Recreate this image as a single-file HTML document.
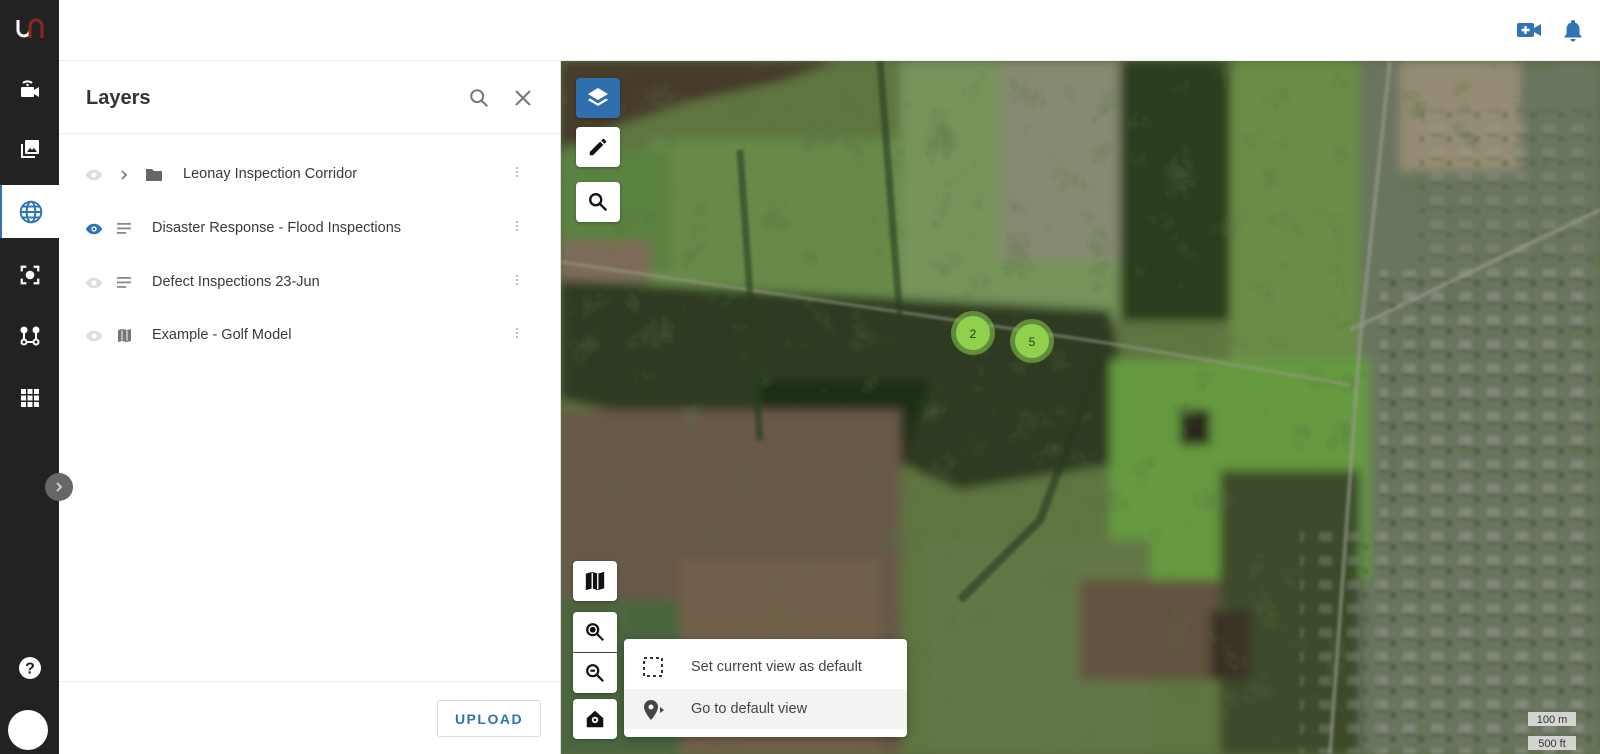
<!DOCTYPE html>
<html><head><meta charset="utf-8"><style>
*{margin:0;padding:0;box-sizing:border-box}
body{width:1600px;height:754px;overflow:hidden;background:#fff;font-family:"Liberation Sans",sans-serif;position:relative}
.abs{position:absolute}
#side{left:0;top:0;width:59px;height:754px;background:#222}
.si{position:absolute;left:0;width:59px;display:flex;align-items:center;justify-content:center}
#top{left:59px;top:0;width:1541px;height:61px;background:#fff;border-bottom:1px solid #eee}
#panel{left:59px;top:61px;width:502px;height:693px;background:#fff;border-right:1px solid #ddd}
.row{position:absolute;left:0;width:502px;height:30px;font-size:14.5px;color:#3a3a3a}
.row span{position:absolute;top:6px}
.dots{position:absolute;left:457px;top:7px;width:3px}
.dots i{display:block;width:2px;height:2px;background:#bbb;margin-bottom:2px}
.mb{position:absolute;width:44px;height:40px;background:#fff;border-radius:4px;display:flex;align-items:center;justify-content:center;box-shadow:0 1px 3px rgba(0,0,0,.3)}
</style></head><body>
<div id="side" class="abs">
 <div class="si" style="top:14px;height:30px"><svg width="30" height="26" viewBox="0 0 30 26"><path d="M3 4v10a6 6 0 0 0 12 0" stroke="#fff" stroke-width="3" fill="none"/><path d="M15 22V10a6 6 0 0 1 12 0v12" stroke="#8a2a1e" stroke-width="3" fill="none"/></svg></div>
 <div class="si" style="top:74px;height:28px"><svg width="24" height="24" viewBox="0 0 24 24" fill="#fff"><rect x="3" y="11" width="13" height="10" rx="1"/><path d="M16 14l5-3v10l-5-3z"/><path d="M5 7a7 7 0 0 1 9 0" stroke="#fff" stroke-width="2" fill="none"/><circle cx="9.5" cy="9" r="1.2"/></svg></div>
 <div class="si" style="top:135px;height:28px"><svg width="24" height="24" viewBox="0 0 24 24" fill="#fff"><rect x="7" y="3" width="14" height="14" rx="1"/><path d="M3 7v14h14v-2H5V7z"/><path d="M9 15l3-4 2 2 2-2 3 4z" fill="#222"/></svg></div>
 <div class="abs" style="left:0;top:185px;width:59px;height:53px;background:#fff;display:flex;align-items:center;justify-content:center;border-left:2px solid #2f73b5"><svg width="26" height="26" viewBox="0 0 24 24" fill="none" stroke="#2f73b5" stroke-width="1.8"><circle cx="12" cy="12" r="9.5"/><ellipse cx="12" cy="12" rx="4" ry="9.5"/><path d="M2.5 12h19M4 7h16M4 17h16"/></svg></div>
 <div class="si" style="top:262px;height:26px"><svg width="22" height="22" viewBox="0 0 24 24" fill="none" stroke="#fff" stroke-width="2.4"><path d="M3 8V3h5M16 3h5v5M21 16v5h-5M8 21H3v-5"/><circle cx="12" cy="12" r="3.5" fill="#fff"/></svg></div>
 <div class="si" style="top:323px;height:26px"><svg width="24" height="24" viewBox="0 0 24 24" fill="#fff"><circle cx="6" cy="6" r="3.5"/><circle cx="18" cy="6" r="3.5"/><path d="M6 9v6M18 9v6" stroke="#fff" stroke-width="2"/><circle cx="6" cy="18" r="2.5" fill="none" stroke="#fff" stroke-width="2"/><circle cx="18" cy="18" r="2.5" fill="none" stroke="#fff" stroke-width="2"/><path d="M8.5 18h7" stroke="#fff" stroke-width="2"/></svg></div>
 <div class="si" style="top:385px;height:26px"><svg width="20" height="20" viewBox="0 0 20 20" fill="#fff"><rect x="1" y="1" width="5" height="5"/><rect x="7.5" y="1" width="5" height="5"/><rect x="14" y="1" width="5" height="5"/><rect x="1" y="7.5" width="5" height="5"/><rect x="7.5" y="7.5" width="5" height="5"/><rect x="14" y="7.5" width="5" height="5"/><rect x="1" y="14" width="5" height="5"/><rect x="7.5" y="14" width="5" height="5"/><rect x="14" y="14" width="5" height="5"/></svg></div>
 <div class="si" style="top:655px;height:26px"><svg width="24" height="24" viewBox="0 0 24 24"><circle cx="12" cy="12" r="11" fill="#fff"/><text x="12" y="17.5" text-anchor="middle" font-size="16" font-weight="bold" fill="#222" font-family="Liberation Sans">?</text></svg></div>
 <div class="abs" style="left:8px;top:710px;width:40px;height:40px;border-radius:50%;background:#fff"></div>
</div>
<div class="abs" style="left:45px;top:473px;width:28px;height:28px;border-radius:50%;background:#666;z-index:5;display:flex;align-items:center;justify-content:center"><svg width="12" height="12" viewBox="0 0 12 12"><path d="M4 2l4 4-4 4" stroke="#ccc" stroke-width="2" fill="none"/></svg></div>
<div id="top" class="abs">
 <svg class="abs" style="left:1457px;top:20px" width="26" height="20" viewBox="0 0 26 20"><rect x="1" y="3" width="17" height="14" rx="2" fill="#2f73b5"/><path d="M18 8l7-4v12l-7-4z" fill="#2f73b5"/><path d="M9.5 6v8M5.5 10h8" stroke="#fff" stroke-width="2.4"/></svg>
 <svg class="abs" style="left:1502px;top:18px" width="24" height="24" viewBox="0 0 24 24" fill="#2f73b5"><path d="M12 2a2 2 0 0 1 2 2v.5a6.5 6.5 0 0 1 4.5 6.2V16l2 2.5v1H3.5v-1l2-2.5v-5.3A6.5 6.5 0 0 1 10 4.5V4a2 2 0 0 1 2-2z"/><path d="M9.5 21h5a2.5 2.5 0 0 1-5 0z"/></svg>
</div>
<div id="panel" class="abs">
 <div class="abs" style="left:27px;top:26px;font-size:20px;font-weight:bold;color:#333">Layers</div>
 <svg class="abs" style="left:409px;top:26px" width="22" height="22" viewBox="0 0 24 24" fill="none" stroke="#777" stroke-width="2.2"><circle cx="10" cy="10" r="6.5"/><path d="M15 15l6 6"/></svg>
 <svg class="abs" style="left:455px;top:28px" width="18" height="18" viewBox="0 0 18 18" stroke="#777" stroke-width="2"><path d="M2 2l14 14M16 2L2 16"/></svg>
 <div class="abs" style="left:0;top:72px;width:502px;height:1px;background:#eee"></div>
 <div class="row" style="top:99px">
  <svg class="abs" style="left:26px;top:8px" width="18" height="14" viewBox="0 0 24 16"><path d="M1 8C4 3 8 1 12 1s8 2 11 7c-3 5-7 7-11 7S4 13 1 8z" fill="#ddd"/><circle cx="12" cy="8" r="3.5" fill="#fff"/></svg>
  <svg class="abs" style="left:61px;top:9px" width="8" height="12" viewBox="0 0 8 12"><path d="M2 2l4 4-4 4" stroke="#777" stroke-width="1.6" fill="none"/></svg>
  <svg class="abs" style="left:87px;top:8px" width="16" height="13" viewBox="0 0 16 13"><path d="M0 1h6l2 2h8v10H0z" fill="#666"/></svg>
  <span style="left:124px">Leonay Inspection Corridor</span>
  <div class="dots"><i></i><i></i><i></i></div>
 </div>
 <div class="row" style="top:153px">
  <svg class="abs" style="left:26px;top:8px" width="18" height="14" viewBox="0 0 24 16"><path d="M1 8C4 3 8 1 12 1s8 2 11 7c-3 5-7 7-11 7S4 13 1 8z" fill="#2f73b5"/><circle cx="12" cy="8" r="3.5" fill="#fff"/><circle cx="12" cy="8" r="1.8" fill="#2f73b5"/></svg>
  <svg class="abs" style="left:58px;top:9px" width="14" height="11" viewBox="0 0 14 11" fill="#888"><rect y="0" width="14" height="1.8"/><rect y="4.5" width="14" height="1.8"/><rect y="9" width="9" height="1.8"/></svg>
  <span style="left:93px">Disaster Response - Flood Inspections</span>
  <div class="dots"><i></i><i></i><i></i></div>
 </div>
 <div class="row" style="top:207px">
  <svg class="abs" style="left:26px;top:8px" width="18" height="14" viewBox="0 0 24 16"><path d="M1 8C4 3 8 1 12 1s8 2 11 7c-3 5-7 7-11 7S4 13 1 8z" fill="#ddd"/><circle cx="12" cy="8" r="3.5" fill="#fff"/></svg>
  <svg class="abs" style="left:58px;top:9px" width="14" height="11" viewBox="0 0 14 11" fill="#888"><rect y="0" width="14" height="1.8"/><rect y="4.5" width="14" height="1.8"/><rect y="9" width="9" height="1.8"/></svg>
  <span style="left:93px">Defect Inspections 23-Jun</span>
  <div class="dots"><i></i><i></i><i></i></div>
 </div>
 <div class="row" style="top:260px">
  <svg class="abs" style="left:26px;top:8px" width="18" height="14" viewBox="0 0 24 16"><path d="M1 8C4 3 8 1 12 1s8 2 11 7c-3 5-7 7-11 7S4 13 1 8z" fill="#ddd"/><circle cx="12" cy="8" r="3.5" fill="#fff"/></svg>
  <svg class="abs" style="left:59px;top:8px" width="13" height="13" viewBox="0 0 13 13"><path d="M0 1l4 -1 5 1 4-1v12l-4 1-5-1-4 1z" fill="#777"/><path d="M4 1.5v10M9 1.5v10" stroke="#fff" stroke-width="1"/></svg>
  <span style="left:93px">Example - Golf Model</span>
  <div class="dots"><i></i><i></i><i></i></div>
 </div>
 <div class="abs" style="left:0;top:620px;width:502px;height:1px;background:#eee"></div>
 <div class="abs" style="left:378px;top:639px;width:104px;height:37px;border:1px solid #ddd;border-radius:3px;color:#2f73b5;font-weight:bold;font-size:14px;letter-spacing:1.5px;display:flex;align-items:center;justify-content:center">UPLOAD</div>
</div>
<svg class="abs" style="left:561px;top:61px" width="1039" height="693" viewBox="561 61 1039 693">
 <defs>
  <filter id="b"><feGaussianBlur stdDeviation="5"/></filter>
  <filter id="b2"><feGaussianBlur stdDeviation="1.2"/></filter>
  <filter id="b3"><feGaussianBlur stdDeviation="1.5"/></filter>
  <filter id="n" x="0" y="0" width="100%" height="100%"><feTurbulence baseFrequency="0.025" numOctaves="4" seed="7"/><feColorMatrix type="matrix" values="0 0 0 0 0.1  0 0 0 0 0.16  0 0 0 0 0.06  1.6 0 0 0 -0.7"/></filter>
  <pattern id="h" width="28" height="24" patternUnits="userSpaceOnUse"><rect x="3" y="4" width="13" height="9" fill="#9c9e96"/><rect x="3" y="13" width="13" height="3" fill="#3d4530"/><rect x="18" y="16" width="6" height="6" fill="#34442a"/></pattern>
 </defs>
 <rect x="561" y="61" width="1039" height="693" fill="#5a6a40"/>
 <g filter="url(#b)">
  <rect x="561" y="61" width="1039" height="693" fill="#5e7440"/>
  <rect x="650" y="140" width="300" height="170" fill="#678a48"/>
  <rect x="900" y="61" width="240" height="260" fill="#76935a"/>
  <rect x="1000" y="61" width="130" height="200" fill="#858a70"/>
  <rect x="1120" y="61" width="120" height="260" fill="#2a3d1f"/>
  <rect x="1230" y="61" width="150" height="300" fill="#6a8c46"/>
  <rect x="1360" y="61" width="240" height="693" fill="#6a7560"/>
  <rect x="1400" y="61" width="120" height="110" fill="#948c72"/>
  <rect x="561" y="150" width="110" height="120" fill="#5a8240"/>
  <rect x="561" y="240" width="90" height="40" fill="#7e6c58"/>
  <polygon points="561,280 1110,310 1140,460 960,490 870,450 760,440 561,400" fill="#2e3a22"/>
  <polygon points="760,380 930,380 900,470 760,460" fill="#1c2f16"/>
  <rect x="561" y="410" width="340" height="344" fill="#675847"/>
  <rect x="561" y="600" width="160" height="154" fill="#4a653c"/>
  <rect x="680" y="560" width="200" height="194" fill="#725f4a"/>
  <rect x="1110" y="360" width="260" height="220" fill="#659a40"/>
  <rect x="930" y="540" width="220" height="214" fill="#647646"/>
  <rect x="1080" y="580" width="150" height="100" fill="#625340"/>
  <rect x="1220" y="470" width="140" height="284" fill="#3e4c2b"/>
  <rect x="1210" y="610" width="40" height="70" fill="#3a3126"/>
  <rect x="1180" y="410" width="30" height="35" fill="#2a281c"/>
  <polygon points="561,61 840,61 780,82 690,102 620,125 561,150" fill="#463a2c"/>
 </g>
 <rect x="561" y="61" width="1039" height="693" filter="url(#n)" opacity=".6"/>
 <g opacity=".45" filter="url(#b3)">
  <rect x="1380" y="270" width="220" height="484" fill="url(#h)"/>
  <rect x="1420" y="110" width="180" height="160" fill="url(#h)" opacity=".6"/>
  <rect x="1300" y="530" width="90" height="224" fill="url(#h)" opacity=".7"/>
 </g>
 <g filter="url(#b2)" stroke-opacity=".6">
  <path d="M561 262L900 312 1120 345 1350 385" stroke="#9a9a88" stroke-width="3" fill="none"/>
  <path d="M1390 61L1360 340 1330 754" stroke="#9d9d90" stroke-width="4" fill="none"/>
  <path d="M1350 330L1600 210" stroke="#9d9d90" stroke-width="4" fill="none"/>
  <path d="M1100 360L1040 520 960 600" stroke="#2a3820" stroke-width="8" fill="none"/>
  <path d="M740 150L760 440" stroke="#2a3a20" stroke-width="7" fill="none"/>
  <path d="M880 61L900 320" stroke="#2a3a20" stroke-width="7" fill="none"/>
 </g>
 <circle cx="973" cy="333" r="22" fill="#8ccc4e" opacity=".55"/><circle cx="973" cy="333" r="17" fill="#8fd04c"/>
 <text x="973" y="338" text-anchor="middle" font-size="12" fill="#2b3b1a" font-family="Liberation Sans">2</text>
 <circle cx="1032" cy="341" r="22" fill="#8ccc4e" opacity=".55"/><circle cx="1032" cy="341" r="17" fill="#8fd04c"/>
 <text x="1032" y="346" text-anchor="middle" font-size="12" fill="#2b3b1a" font-family="Liberation Sans">5</text>
 <rect x="1528" y="712" width="48" height="14" fill="#eee" opacity=".8"/><text x="1552" y="723" text-anchor="middle" font-size="11" fill="#333" font-family="Liberation Sans">100 m</text>
 <rect x="1528" y="736" width="48" height="14" fill="#eee" opacity=".8"/><text x="1552" y="747" text-anchor="middle" font-size="11" fill="#333" font-family="Liberation Sans">500 ft</text>
</svg>
<div class="mb" style="left:576px;top:78px;background:#2f6fb0"><svg width="24" height="24" viewBox="0 0 24 24" fill="#fff"><path d="M12 2l10 6-10 6L2 8z"/><path d="M4 12.5l8 5 8-5 2 1.5-10 6-10-6z"/></svg></div>
<div class="mb" style="left:576px;top:127px"><svg width="22" height="22" viewBox="0 0 24 24" fill="#111"><path d="M3 17.5V21h3.5L17.8 9.7l-3.5-3.5zM20.7 6.8a1 1 0 0 0 0-1.4l-2.1-2.1a1 1 0 0 0-1.4 0l-1.7 1.7 3.5 3.5z"/></svg></div>
<div class="mb" style="left:576px;top:182px"><svg width="22" height="22" viewBox="0 0 24 24" fill="none" stroke="#111" stroke-width="2.6"><circle cx="9.5" cy="9.5" r="6"/><path d="M14 14l7 7"/></svg></div>
<div class="mb" style="left:573px;top:561px"><svg width="22" height="22" viewBox="0 0 24 24" fill="#111"><path d="M2 4l7-2 6 2 7-2v18l-7 2-6-2-7 2z"/><path d="M9 3v17M15 4v17" stroke="#fff" stroke-width="1.5"/></svg></div>
<div class="mb" style="left:573px;top:612px;border-radius:4px 4px 0 0"><svg width="22" height="22" viewBox="0 0 24 24" fill="none" stroke="#111" stroke-width="2.4"><circle cx="9.5" cy="9.5" r="6"/><path d="M14 14l7 7"/><circle cx="9.5" cy="9.5" r="2" fill="#111"/></svg></div>
<div class="mb" style="left:573px;top:653px;border-radius:0 0 4px 4px"><svg width="22" height="22" viewBox="0 0 24 24" fill="none" stroke="#111" stroke-width="2.4"><circle cx="9.5" cy="9.5" r="6"/><path d="M14 14l7 7M7 9.5h5"/></svg></div>
<div class="mb" style="left:573px;top:699px"><svg width="22" height="22" viewBox="0 0 24 24"><path d="M12 3l9 8v10H3V11z" fill="#111"/><circle cx="12" cy="13" r="3.5" fill="#fff"/><circle cx="12" cy="13" r="1.5" fill="#111"/></svg></div>
<div class="abs" style="left:624px;top:639px;width:283px;height:98px;background:#fff;border-radius:4px;box-shadow:0 2px 8px rgba(0,0,0,.3)">
 <div class="abs" style="left:0;top:50px;width:283px;height:40px;background:#f3f3f3"></div>
 <svg class="abs" style="left:18px;top:17px" width="24" height="24" viewBox="0 0 24 24" fill="none" stroke="#333" stroke-width="2" stroke-dasharray="3 3"><rect x="2" y="2" width="18" height="18"/></svg>
 <svg class="abs" style="left:18px;top:59px" width="24" height="24" viewBox="0 0 24 24" fill="#444"><path d="M9 2a7 7 0 0 1 7 7c0 5-7 13-7 13S2 14 2 9a7 7 0 0 1 7-7z"/><circle cx="9" cy="9" r="2.5" fill="#f3f3f3"/><path d="M18 9l4 3-4 3z"/></svg>
 <div class="abs" style="left:67px;top:20px;font-size:14.5px;color:#444">Set current view as default</div>
 <div class="abs" style="left:67px;top:62px;font-size:14.5px;color:#444">Go to default view</div>
</div>
</body></html>
